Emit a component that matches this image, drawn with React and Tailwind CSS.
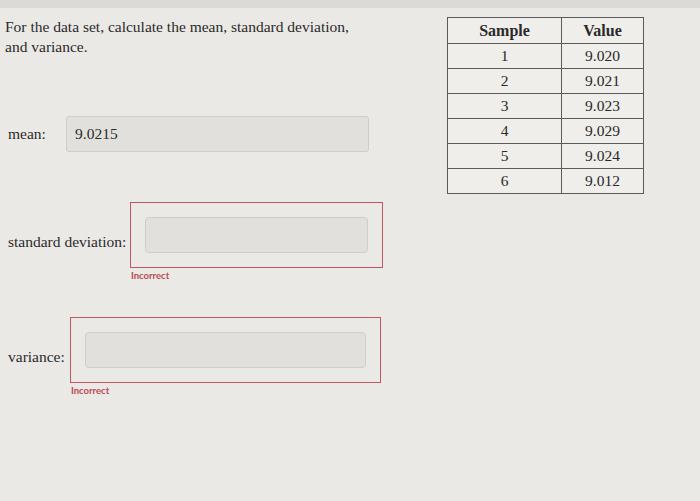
export default function App() {
  const rows = [
    ["1", "9.020"],
    ["2", "9.021"],
    ["3", "9.023"],
    ["4", "9.029"],
    ["5", "9.024"],
    ["6", "9.012"],
  ];
  const serif = { fontFamily: '"Liberation Serif", "Times New Roman", serif' };
  const sans = { fontFamily: 'Lato, "Open Sans", sans-serif' };

  return (
    <div className="w-[700px] h-[501px] bg-[#ebe9e6] overflow-hidden text-[#2a2a2a]" style={serif}>
      <div className="h-[8px] bg-[#dcdad7]" />
      <div className="flex">
        {/* left: question and answer fields */}
        <div className="w-[445px] pl-[5px]">
          <p className="mt-[9px] text-[15.5px] leading-[20px] w-[360px]">
            For the data set, calculate the mean, standard deviation,
            <br />
            and variance.
          </p>

          <div className="mt-[59px] flex items-center">
            <span className="w-[61px] pl-[3px] text-[15.5px]">mean:</span>
            <div className="w-[303px] h-[36px] rounded-[3px] border border-[#cfcdca] bg-[#e1e0dd] flex items-center pl-[8px] text-[15.5px]">
              9.0215
            </div>
          </div>

          <div className="mt-[50px] flex items-center">
            <span className="w-[125px] pl-[3px] pt-[14px] text-[15.5px]">standard deviation:</span>
            <div className="border-[1.5px] border-[#c25660] w-[253px] h-[66px] flex items-center px-[14px]">
              <div className="w-full h-[36px] rounded-[4px] border border-[#cfcdca] bg-[#e1e0dd]" />
            </div>
          </div>
          <div className="ml-[126px] mt-[1px] text-[9.5px] font-bold text-[#b84a54]" style={sans}>
            Incorrect
          </div>

          <div className="mt-[34px] flex items-center">
            <span className="w-[65px] pl-[3px] pt-[12px] text-[15.5px]">variance:</span>
            <div className="border-[1.5px] border-[#c25660] w-[311px] h-[66px] flex items-center px-[14px]">
              <div className="w-full h-[36px] rounded-[4px] border border-[#cfcdca] bg-[#e1e0dd]" />
            </div>
          </div>
          <div className="ml-[66px] mt-[1px] text-[9.5px] font-bold text-[#b84a54]" style={sans}>
            Incorrect
          </div>
        </div>

        {/* right: data table */}
        <div className="pl-[2px] pt-[9px]">
          <table className="border-collapse text-[15.5px] text-center bg-[#efeeeb]">
            <thead>
              <tr className="h-[26px]">
                <th className="w-[114px] border border-[#5a5a5a] font-bold text-[16px]">Sample</th>
                <th className="w-[82px] border border-[#5a5a5a] font-bold text-[16px]">Value</th>
              </tr>
            </thead>
            <tbody>
              {rows.map(([s, v]) => (
                <tr key={s} className="h-[25px]">
                  <td className="border border-[#5a5a5a]">{s}</td>
                  <td className="border border-[#5a5a5a]">{v}</td>
                </tr>
              ))}
            </tbody>
          </table>
        </div>
      </div>
    </div>
  );
}
